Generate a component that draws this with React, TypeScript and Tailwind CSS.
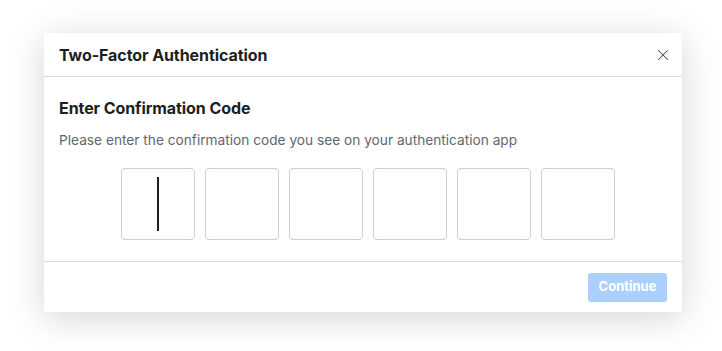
import { X } from 'lucide-react';

export default function App() {
  const boxes = [0, 1, 2, 3, 4, 5];

  return (
    <main className="min-h-[351px] w-[722px] bg-white pt-[33px] pl-[44px] font-['Inter',Arial,sans-serif]">
      <div className="w-[638px] bg-white shadow-[0_6px_34px_rgba(0,0,0,0.17)]">
        {/* Header */}
        <div className="h-[44px] flex items-center justify-between pl-[15px] pr-[10px] border-b border-[#dadde1]">
          <h1 className="text-[16px] font-bold tracking-[-0.08px] text-[#1c1e21]">Two-Factor Authentication</h1>
          <button className="text-[#4b4f56]">
            <X className="w-[18px] h-[18px]" strokeWidth={1.4} />
          </button>
        </div>

        {/* Body */}
        <div className="pt-[21px] pb-[21px] pl-[15px] border-b border-[#dadde1]">
          <h2 className="text-[16px] leading-[20px] font-bold tracking-[-0.08px] text-[#1c1e21]">Enter Confirmation Code</h2>
          <p className="mt-[13px] text-[13.7px] leading-[18px] text-[#606770]">
            Please enter the confirmation code you see on your authentication app
          </p>
          <div className="mt-[19px] pl-[62px] flex gap-[10px]">
            {boxes.map(i => (
              <div
                key={i}
                className="w-[74px] h-[72px] rounded-[4px] border border-[#ccd0d5] flex items-center justify-center"
              >
                {i === 0 && <div className="w-[1.5px] h-[54px] bg-[#1c1e21]" />}
              </div>
            ))}
          </div>
        </div>

        {/* Footer */}
        <div className="h-[50px] flex items-center justify-end pr-[15px]">
          <button className="w-[79px] h-[29px] rounded-[3px] bg-[#acd0fd] text-white text-[13px] font-bold">
            Continue
          </button>
        </div>
      </div>
    </main>
  );
}
